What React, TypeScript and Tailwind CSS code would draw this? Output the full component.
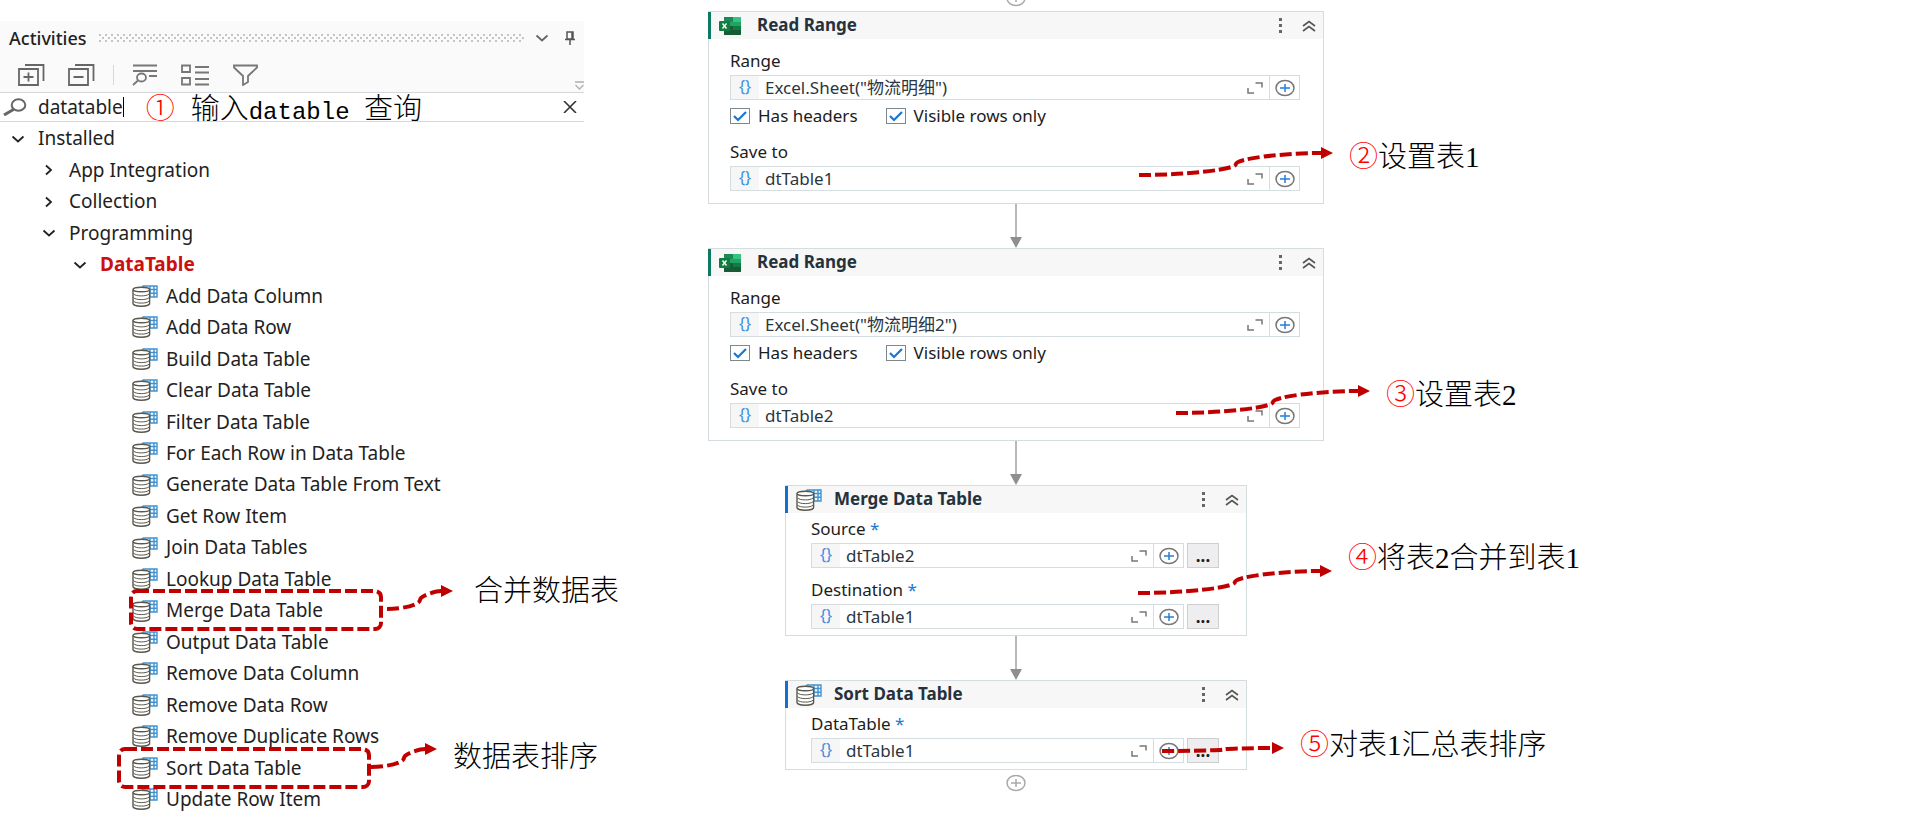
import React, { useState } from 'react';

interface TreeNode {
  name: string;
  level: number;
  open?: boolean;
  active?: boolean;
}

interface ExpressionFieldProps {
  id: string;
  label: string;
  value: string;
  required?: boolean;
  browse?: boolean;
}

interface ActivityCardProps {
  title: string;
  kind: 'excel' | 'data';
  children: React.ReactNode;
}

const categories: TreeNode[] = [
  { name: 'Installed', level: 0, open: true },
  { name: 'App Integration', level: 1 },
  { name: 'Collection', level: 1 },
  { name: 'Programming', level: 1, open: true },
  { name: 'DataTable', level: 2, open: true, active: true }
];

const activities = [
  'Add Data Column',
  'Add Data Row',
  'Build Data Table',
  'Clear Data Table',
  'Filter Data Table',
  'For Each Row in Data Table',
  'Generate Data Table From Text',
  'Get Row Item',
  'Join Data Tables',
  'Lookup Data Table',
  'Merge Data Table',
  'Output Data Table',
  'Remove Data Column',
  'Remove Data Row',
  'Remove Duplicate Rows',
  'Sort Data Table',
  'Update Row Item'
];

const levelPadding = ['pl-[9px]', 'pl-10', 'pl-[71px]'];

const noteText = "font-['Liberation_Serif','Noto_Sans_CJK_SC',serif] text-[29px] leading-6 font-light whitespace-nowrap text-black";

/* ---------- icons ---------- */

function DatabaseIcon() {
  return (
    <svg width="26" height="22" viewBox="0 0 26 22" fill="none" className="shrink-0">
      <path d="M10.500 1H25v11h-7M10.500 1v3M10.500 4.500H25M17 8.200h8M18 1v11M22 1v11" stroke="#3f93d2" strokeWidth="1.400" />
      <path d="M1 4.500v14c0 1.500 3.600 2.700 8.300 2.700s8.300-1.200 8.300-2.700v-14" fill="#fff" stroke="#5a584c" strokeWidth="1.400" />
      <ellipse cx="9.300" cy="4.500" rx="8.300" ry="2.300" fill="#fff" stroke="#5a584c" strokeWidth="1.400" />
      <path
        d="M1.500 9c1.500 1.300 4.300 1.900 7.800 1.900s6.300-.6 7.800-1.900M1.500 12.700c1.500 1.300 4.300 1.900 7.800 1.900s6.300-.6 7.800-1.900M1.500 16.200c1.500 1.300 4.300 1.900 7.800 1.900s6.300-.6 7.800-1.900"
        stroke="#5a584c"
        strokeWidth="1"
      />
    </svg>
  );
}

function ExcelIcon() {
  return (
    <svg width="22" height="18" viewBox="0 0 22 18" className="shrink-0">
      <rect x="5" y="0" width="17" height="18" rx="1" fill="#21a366" />
      <path d="M5 0h9v5H5z" fill="#1b8a55" />
      <path d="M14 0h7a1 1 0 0 1 1 1v4h-8z" fill="#33c481" />
      <path d="M5 9h9v9H5z" fill="#185c37" />
      <path d="M14 9h8v4h-8z" fill="#107c41" />
      <path d="M14 13h8v4a1 1 0 0 1-1 1h-7z" fill="#145c36" />
      <rect x="0" y="4" width="11" height="10" rx="1" fill="#107c41" />
      <path d="M3.500 6.500l4 5M7.500 6.500l-4 5" stroke="#fff" strokeWidth="1.400" />
    </svg>
  );
}

function Chevron({ open }: { open?: boolean }) {
  return (
    <svg width="18" height="12" viewBox="0 0 18 12" fill="none" stroke="currentColor" strokeWidth="1.800">
      {open ? <path d="M3.500 3.500L9 8.500l5.500-5" /> : <path d="M6 1.500L11 6l-5 4.500" />}
    </svg>
  );
}

function CirclePlus({ color, plus }: { color: string; plus: string }) {
  return (
    <svg width="22" height="18" viewBox="0 0 22 18" fill="none" strokeWidth="1.500">
      <ellipse cx="11" cy="9" rx="9" ry="7.500" stroke={color} />
      <path d="M6 9h10M11 5v8" stroke={plus} />
    </svg>
  );
}

/* ---------- annotations ---------- */

function DashedArrow({ width, rise }: { width: number; rise: number }) {
  const end = width - 12;
  const mid = width / 2;
  const bottom = 6 + rise;
  return (
    <svg width={width} height={rise + 12} fill="none" className="shrink-0">
      <path
        d={`M0 ${bottom}C${mid / 2} ${bottom} ${mid} ${6 + rise * 0.75} ${mid} ${6 + rise / 2}S${mid * 1.5} 6 ${end} 6`}
        stroke="#c00000"
        strokeWidth="4"
        strokeDasharray="12 4"
      />
      <path d={`M${end} 0l12 6l-12 6z`} fill="#c00000" />
    </svg>
  );
}

function DashedFrame() {
  return (
    <svg width="254" height="42" fill="none">
      <rect x="2" y="2" width="250" height="38" rx="6" stroke="#c00000" strokeWidth="4" strokeDasharray="12 4" />
    </svg>
  );
}

function StepNote({ step, text, width, rise, className }: { step: string; text: string; width: number; rise: number; className: string }) {
  return (
    <div className={`absolute left-full z-10 flex gap-4 pointer-events-none ${className}`}>
      <DashedArrow width={width} rise={rise} />
      <p className={noteText}>
        <span className="text-[#ff0000]">{step}</span>
        {text}
      </p>
    </div>
  );
}

/* ---------- activities panel ---------- */

function ActivitiesPanel() {
  const [query, setQuery] = useState('datatable');

  return (
    <aside className="flex flex-col h-full pt-[21px] text-[19px] text-[#222]">
      <div className="bg-[#fafafa] border-b border-[#d6d9dc] h-[72px] flex flex-col">
        <div className="flex items-center h-[34px] pl-[9px] pr-1">
          <h2 className="text-[18px] font-medium">Activities</h2>
          <svg height="9" className="flex-1 ml-3 mr-1">
            <defs>
              <pattern id="grip" width="6" height="6" patternUnits="userSpaceOnUse">
                <path d="M0 0h2v2H0zM3 3h2v2H3z" fill="#c4c4c4" />
              </pattern>
            </defs>
            <rect width="100%" height="9" fill="url(#grip)" />
          </svg>
          <button aria-label="Window position" className="w-7 mr-1 flex justify-center text-[#666]">
            <Chevron open />
          </button>
          <button aria-label="Pin" className="w-5 flex justify-center">
            <svg width="12" height="14" viewBox="0 0 12 14" fill="none" stroke="#555" strokeWidth="1.500">
              <path d="M3 1h6v7H3zM8 1v7M1 8.500h10M6 9v5" />
            </svg>
          </button>
        </div>
        <div className="flex items-center flex-1 pl-[18px] pt-0.5 relative">
          <button aria-label="Expand all">
            <svg width="27" height="22" viewBox="0 0 27 22" fill="none" stroke="#666" strokeWidth="1.800">
              <path d="M1 5h19v16H1zM7 1h18.500v16M5.500 13h10M10.500 8.500v9" />
            </svg>
          </button>
          <button aria-label="Collapse all" className="ml-[23px]">
            <svg width="27" height="22" viewBox="0 0 27 22" fill="none" stroke="#666" strokeWidth="1.800">
              <path d="M1 5h19v16H1zM7 1h18.500v16M5.500 13h10" />
            </svg>
          </button>
          <span className="w-px h-5 bg-[#d8d8d8] mx-[18px]" />
          <button aria-label="Search options">
            <svg width="26" height="22" viewBox="0 0 26 22" fill="none" stroke="#777" strokeWidth="1.800">
              <path d="M1 1.500h24M1 7h24M17 12h8M6 16.500L1 21" />
              <ellipse cx="9.500" cy="13.500" rx="4.500" ry="4" />
            </svg>
          </button>
          <button aria-label="View options" className="ml-[22px]">
            <svg width="30" height="22" viewBox="0 0 30 22" fill="none" stroke="#777" strokeWidth="1.800">
              <path d="M2 1.500h8v6.500H2zM2 14h8v6.500H2zM15 3h14M15 8.500h14M15 15h14M15 20.500h14" />
            </svg>
          </button>
          <button aria-label="Filter" className="ml-[22px]">
            <svg width="27" height="22" viewBox="0 0 27 22" fill="none" stroke="#777" strokeWidth="1.800">
              <path d="M2 1.500h23v2l-9 8.500v6l-5 3V12L2 3.500z" />
            </svg>
          </button>
          <svg width="9" height="9" viewBox="0 0 9 9" fill="none" stroke="#b0b0b0" strokeWidth="1.300" className="absolute right-0 bottom-0.5">
            <path d="M0 1h9M.5 4L4.500 8l4-4" />
          </svg>
        </div>
      </div>

      <div className="flex items-center h-[29px] border-b border-[#d6d9dc] pl-[3px] pr-1">
        <label htmlFor="search" className="w-[35px]" aria-label="Search activities">
          <svg width="24" height="18" viewBox="0 0 24 18" fill="none" stroke="#666">
            <ellipse cx="15.500" cy="7" rx="6.800" ry="5.800" strokeWidth="2" />
            <path d="M10.500 11.500L1 17" strokeWidth="3" />
          </svg>
        </label>
        <input
          id="search"
          value={query}
          onChange={(e) => setQuery(e.target.value)}
          className="field-sizing-content outline-none bg-transparent"
        />
        <span className="w-px h-5 bg-black" />
        <p className={`${noteText} ml-[22px] pt-2`}>
          <span className="text-[#ff0000] mr-4">①</span>
          输入<span className="font-['Liberation_Mono',monospace] text-2xl leading-6">datable </span>查询
        </p>
        <button aria-label="Clear search" className="ml-auto w-5 flex justify-center">
          <svg width="14" height="12" viewBox="0 0 14 12" stroke="#333" strokeWidth="1.600">
            <path d="M1 0l12 12M13 0L1 12" />
          </svg>
        </button>
      </div>

      <ul className="flex-1 flex flex-col pt-px pb-[15px]">
        {categories.map((node) => (
          <li key={node.name} className={`flex-1 flex items-center ${levelPadding[node.level]}`}>
            <button className="flex items-center gap-[11px]">
              <Chevron open={node.open} />
              <span className={node.active ? 'font-bold text-[#cc1010]' : ''}>{node.name}</span>
            </button>
          </li>
        ))}
        {activities.map((name) => (
          <li key={name} className="flex-1 flex items-center pl-[132px] relative">
            <button className="flex items-center gap-2 whitespace-nowrap">
              <DatabaseIcon />
              {name}
            </button>
            {name === 'Merge Data Table' && (
              <div className="absolute z-10 left-[129px] bottom-[-5px] flex items-end pointer-events-none">
                <DashedFrame />
                <div className="flex items-end gap-[21px] ml-1 mb-4">
                  <DashedArrow width={66} rise={18} />
                  <p className={`${noteText} mb-3`}>合并数据表</p>
                </div>
              </div>
            )}
            {name === 'Sort Data Table' && (
              <div className="absolute z-10 left-[117px] bottom-[-5px] flex items-end pointer-events-none">
                <DashedFrame />
                <div className="flex items-end gap-4 mb-4">
                  <DashedArrow width={66} rise={18} />
                  <p className={`${noteText} mb-1`}>数据表排序</p>
                </div>
              </div>
            )}
          </li>
        ))}
      </ul>
    </aside>
  );
}

/* ---------- workflow ---------- */

function ExpressionField({ id, label, value, required, browse }: ExpressionFieldProps) {
  return (
    <div>
      <label htmlFor={id} className="block leading-5 text-[#1c1c1c]">
        {label}
        {required && <span className="text-[#1976d2]"> *</span>}
      </label>
      <div className="flex mt-1 h-[25px]">
        <div className="flex flex-1 min-w-0 border border-[#d5dde1] bg-white">
          <span className="w-7 bg-[#f6f6f7] text-[#3a8ee0] text-[16px] leading-[21px] text-center">{'{}'}</span>
          <input id={id} defaultValue={value} className="flex-1 min-w-0 pl-1.5 text-[#2b3640] outline-none" />
          <button aria-label="Open editor" className="w-7 flex items-center justify-center">
            <svg width="16" height="12" viewBox="0 0 16 12" fill="none" stroke="#777" strokeWidth="1.500">
              <path d="M1 6v5h6M8.500 1H15v4.500" />
            </svg>
          </button>
          <button aria-label="Add value" className="w-[30px] flex items-center justify-center border-l border-[#d5dde1]">
            <CirclePlus color="#777" plus="#2680d9" />
          </button>
        </div>
        {browse && (
          <button className="ml-[3px] w-8 border border-[#cfcfd2] bg-[#eeeef0] font-bold leading-5">...</button>
        )}
      </div>
    </div>
  );
}

function CheckOption({ id, label }: { id: string; label: string }) {
  return (
    <div className="flex items-center gap-2">
      <span className="grid">
        <input id={id} type="checkbox" defaultChecked className="peer appearance-none col-start-1 row-start-1 w-5 h-4 border border-[#7d8790] bg-white" />
        <svg width="20" height="16" viewBox="0 0 20 16" fill="none" className="col-start-1 row-start-1 pointer-events-none invisible peer-checked:visible">
          <path d="M4 8l4 4 8-8" stroke="#1976d2" strokeWidth="2.200" />
        </svg>
      </span>
      <label htmlFor={id} className="leading-4">{label}</label>
    </div>
  );
}

function ActivityCard({ title, kind, children }: ActivityCardProps) {
  const excel = kind === 'excel';
  return (
    <section className={`relative border border-[#d5dde1] bg-white ${excel ? 'w-full' : 'w-3/4'}`}>
      <header className={`flex items-center h-[27px] -ml-px bg-[#f7f7f7] border-l-[3px] ${excel ? 'border-[#0a7a64]' : 'border-[#1271d0]'}`}>
        <span className="w-[46px] pl-2">{excel ? <ExcelIcon /> : <DatabaseIcon />}</span>
        <h3 className="font-bold leading-6 pb-0.5 text-[#26323b] flex-1">{title}</h3>
        <button aria-label="More" className="w-7 flex justify-center">
          <svg width="4" height="16" fill="#666">
            <path d="M0 0h3v3H0zM0 6h3v3H0zM0 12h3v3H0z" />
          </svg>
        </button>
        <button aria-label="Collapse" className="w-7 flex justify-center">
          <svg width="14" height="12" viewBox="0 0 14 12" fill="none" stroke="#555" strokeWidth="1.600">
            <path d="M1 6l6-4.500L13 6M1 11l6-4.500 6 4.500" />
          </svg>
        </button>
      </header>
      {children}
    </section>
  );
}

function Connector() {
  return (
    <svg width="14" height="44" viewBox="0 0 14 44" className="shrink-0">
      <path d="M7 0v36" stroke="#b8b8b8" strokeWidth="2" />
      <path d="M1 33h12L7 44z" fill="#8f8f8f" />
    </svg>
  );
}

function ReadRange({ id, sheet, output, children }: { id: string; sheet: string; output: string; children: React.ReactNode }) {
  return (
    <ActivityCard title="Read Range" kind="excel">
      <div className="pl-[21px] pr-[23px] pt-3 pb-3">
        <ExpressionField id={`${id}-range`} label="Range" value={sheet} />
        <div className="flex gap-7 mt-2 mb-[18px]">
          <CheckOption id={`${id}-headers`} label="Has headers" />
          <CheckOption id={`${id}-visible`} label="Visible rows only" />
        </div>
        <ExpressionField id={`${id}-save`} label="Save to" value={output} />
      </div>
      {children}
    </ActivityCard>
  );
}

export default function App() {
  return (
    <div className="grid grid-cols-[584fr_124fr_616fr_581fr] h-screen overflow-hidden bg-white font-['Noto_Sans','Noto_Sans_CJK_SC',sans-serif]">
      <ActivitiesPanel />

      <main className="col-start-3 flex flex-col items-center -mt-[11px] text-[17px] text-[#1c1c1c]">
        <button aria-label="Add activity at start" className="mb-1">
          <CirclePlus color="#aaa" plus="#aaa" />
        </button>

        <ReadRange id="read-1" sheet={'Excel.Sheet("物流明细")'} output="dtTable1">
          <StepNote step="②" text="设置表1" width={194} rise={22} className="-ml-46 top-[135px] *:last:-mt-0.5" />
        </ReadRange>
        <Connector />

        <ReadRange id="read-2" sheet={'Excel.Sheet("物流明细2")'} output="dtTable2">
          <StepNote step="③" text="设置表2" width={194} rise={22} className="-ml-[147px] top-[136px] *:last:-mt-0.5" />
        </ReadRange>
        <Connector />

        <ActivityCard title="Merge Data Table" kind="data">
          <div className="flex flex-col gap-3 pl-[25px] pr-[27px] py-1.5">
            <ExpressionField id="merge-source" label="Source" value="dtTable2" required browse />
            <ExpressionField id="merge-destination" label="Destination" value="dtTable1" required browse />
          </div>
          <StepNote step="④" text="将表2合并到表1" width={194} rise={22} className="-ml-27 top-[60px] items-start *:first:mt-[19px]" />
        </ActivityCard>
        <Connector />

        <ActivityCard title="Sort Data Table" kind="data">
          <div className="pl-[25px] pr-[27px] py-1.5">
            <ExpressionField id="sort-table" label="DataTable" value="dtTable1" required browse />
          </div>
          <StepNote step="⑤" text="对表1汇总表排序" width={122} rise={3} className="-ml-21 top-[52px] items-end" />
        </ActivityCard>

        <button aria-label="Add activity at end" className="mt-1">
          <CirclePlus color="#aaa" plus="#aaa" />
        </button>
      </main>
    </div>
  );
}
